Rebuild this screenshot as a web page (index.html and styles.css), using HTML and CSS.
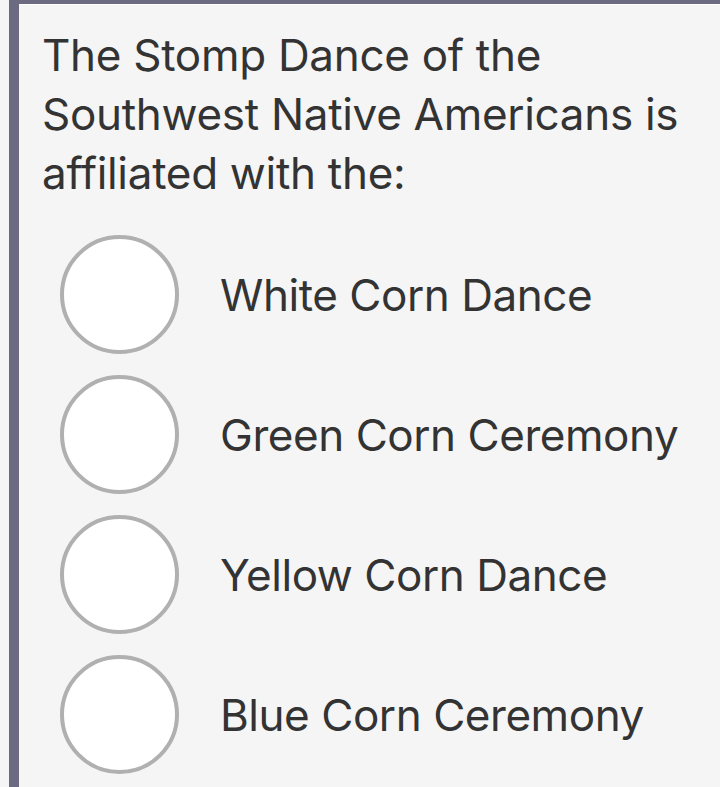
FILE: index.html
```html
<!DOCTYPE html>
<html lang="en">
<head>
<meta charset="utf-8">
<title>Question</title>
<link rel="stylesheet" href="styles.css">
</head>
<body>
<div class="frame">
  <div class="panel">
    <p class="question">The Stomp Dance of the Southwest Native Americans is affiliated with the:</p>
    <ul class="options">
      <li class="option"><span class="radio"></span><span class="label">White Corn Dance</span></li>
      <li class="option"><span class="radio"></span><span class="label">Green Corn Ceremony</span></li>
      <li class="option"><span class="radio"></span><span class="label">Yellow Corn Dance</span></li>
      <li class="option"><span class="radio"></span><span class="label">Blue Corn Ceremony</span></li>
    </ul>
  </div>
</div>
</body>
</html>
```
FILE: styles.css
```css
html, body {
  margin: 0;
  padding: 0;
  background: #f5f5f5;
}
body {
  font-family: "Inter", "Noto Sans", sans-serif;
  color: #333333;
  overflow: hidden;
}
.frame {
  margin-left: 9px;
  height: 787px;
  border-left: 10px solid #6c6a80;
  border-top: 4px solid #6c6a80;
  box-sizing: border-box;
}
.panel {
  box-shadow: inset 0 1px 0 #ffffff;
  height: 100%;
  padding: 22px 0 0 23px;
  box-sizing: border-box;
}
.question {
  margin: 0;
  font-size: 44px;
  line-height: 59px;
  letter-spacing: -0.3px;
  width: 660px;
}
.options {
  list-style: none;
  margin: 32px 0 0 18px;
  padding: 0;
  display: flex;
  flex-direction: column;
  gap: 21px;
}
.option {
  display: flex;
  align-items: center;
  gap: 41px;
}
.radio {
  width: 119px;
  height: 119px;
  box-sizing: border-box;
  border: 4px solid #b0b0b0;
  border-radius: 50%;
  background: #ffffff;
  flex: none;
}
.label {
  font-size: 44px;
  line-height: 1;
  letter-spacing: -0.45px;
}
```
